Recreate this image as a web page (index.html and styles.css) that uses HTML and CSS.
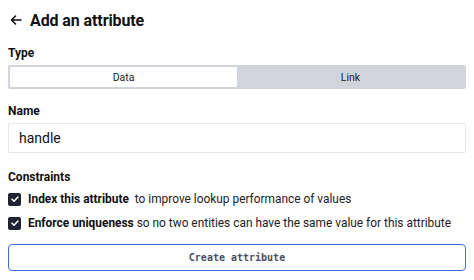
FILE: index.html
```html
<!DOCTYPE html>
<html>
<head>
<meta charset="utf-8">
<link rel="stylesheet" href="styles.css">
</head>
<body>
<div class="panel">
  <div class="header">
    <svg class="back" width="14" height="14" viewBox="0 0 14 14"><path d="M12 7H2.5M6.5 3L2.5 7l4 4" fill="none" stroke="#111" stroke-width="1.6" stroke-linecap="round" stroke-linejoin="round"/></svg>
    <h1>Add an attribute</h1>
  </div>
  <div class="label type-label">Type</div>
  <div class="seg">
    <div class="opt active">Data</div>
    <div class="opt">Link</div>
  </div>
  <div class="label name-label">Name</div>
  <div class="input">handle</div>
  <div class="label cons-label">Constraints</div>
  <div class="check">
    <span class="box"><svg width="12" height="12" viewBox="0 0 12 12"><path d="M3 6.2l2 2 4-4.2" fill="none" stroke="#fff" stroke-width="1.6" stroke-linecap="round" stroke-linejoin="round"/></svg></span>
    <span><b>Index this attribute</b>&nbsp; to improve lookup performance of values</span>
  </div>
  <div class="check">
    <span class="box"><svg width="12" height="12" viewBox="0 0 12 12"><path d="M3 6.2l2 2 4-4.2" fill="none" stroke="#fff" stroke-width="1.6" stroke-linecap="round" stroke-linejoin="round"/></svg></span>
    <span><b>Enforce uniqueness</b> so no two entities can have the same value for this attribute</span>
  </div>
  <button class="btn">Create attribute</button>
</div>
</body>
</html>
```
FILE: styles.css
```css
* { box-sizing: border-box; }
body {
  margin: 0;
  background: #fff;
  font-family: "Roboto", "Liberation Sans", sans-serif;
  color: #111;
}
.panel {
  padding: 8px 8px;
  display: flex;
  flex-direction: column;
  width: 474px;
}
.header {
  display: flex;
  align-items: center;
  gap: 7px;
  height: 22px;
  margin-top: 1px;
}
.back { margin-left: 1px; }
h1 {
  margin: 0;
  font-size: 16px;
  font-weight: 700;
  letter-spacing: -0.1px;
}
.label {
  font-size: 12px;
  font-weight: 700;
  height: 18px;
  line-height: 18px;
}
.type-label { margin-top: 13px; }
.seg {
  margin-top: 3px;
  height: 24px;
  background: #d1d5db;
  border-radius: 2px;
  display: flex;
  padding: 2px;
  width: 458px;
}
.opt {
  flex: 1;
  display: flex;
  align-items: center;
  justify-content: center;
  font-size: 10.5px;
  color: #222;
}
.opt.active {
  background: #fff;
  border-radius: 1px;
}
.name-label { margin-top: 13px; }
.input {
  margin-top: 3px;
  width: 458px;
  height: 30px;
  border: 1px solid #e5e7eb;
  border-radius: 2px;
  padding: 0 10px;
  display: flex;
  align-items: center;
  font-size: 14px;
  color: #111;
}
.cons-label { margin-top: 15px; }
.check {
  display: flex;
  align-items: center;
  gap: 7px;
  font-size: 11.9px;
  height: 16px;
  margin-top: 5px;
  color: #222;
  white-space: nowrap;
}
.check + .check { margin-top: 8px; }
.check b { font-weight: 700; color: #111; }
.box {
  width: 13px;
  height: 13px;
  background: #1f2333;
  border-radius: 2px;
  display: flex;
  align-items: center;
  justify-content: center;
  flex: none;
}
.btn {
  margin-top: 13px;
  width: 458px;
  height: 27px;
  border: 1.5px solid #3b6fd4;
  border-radius: 4px;
  background: #fff;
  font-family: "DejaVu Sans Mono", "Liberation Mono", monospace;
  font-weight: 700;
  font-size: 10px;
  color: #4b5060;
}
```
